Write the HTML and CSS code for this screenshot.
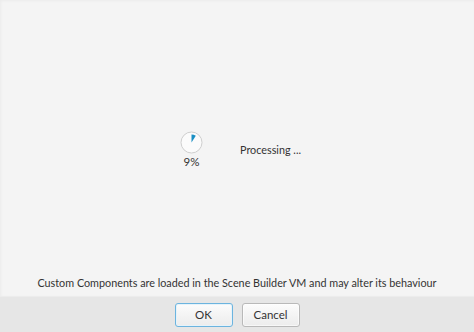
FILE: index.html
```html
<!DOCTYPE html>
<html>
<head>
<meta charset="utf-8">
<link rel="stylesheet" href="styles.css">
</head>
<body>
<div class="dialog">
  <div class="content">
    <div class="progress-row">
      <div class="indicator">
        <svg class="pie" width="23" height="23" viewBox="0 0 23 23">
          <circle cx="11.5" cy="11.5" r="10.5" fill="#fbfbfb" stroke="#cfcfcf" stroke-width="1"/>
          <path d="M11.5 11.5 L11.5 3.5 A8 8 0 0 1 15.79 4.75 Z" fill="#1a8fc4"/>
        </svg>
        <span class="percent">9%</span>
      </div>
      <span class="status">Processing ...</span>
    </div>
    <p class="warning">Custom Components are loaded in the Scene Builder VM and may alter its behaviour</p>
  </div>
  <div class="buttons">
    <button class="btn btn-default">OK</button>
    <button class="btn">Cancel</button>
  </div>
</div>
</body>
</html>
```
FILE: styles.css
```css
html, body {
  margin: 0;
  padding: 0;
  width: 474px;
  height: 332px;
  overflow: hidden;
}
body {
  font-family: Lato, "Open Sans", sans-serif;
  font-size: 10.8px;
  color: #333;
  background: #f4f4f4;
}
.dialog {
  display: flex;
  flex-direction: column;
  height: 332px;
}
.content {
  flex: 1;
  display: flex;
  flex-direction: column;
  align-items: center;
  box-shadow: inset 1px 1px 3px rgba(0,0,0,0.04);
}
.progress-row {
  display: flex;
  align-items: center;
  gap: 37px;
  margin-top: 131px;
  padding-left: 7px;
}
.indicator {
  display: flex;
  flex-direction: column;
  align-items: center;
  width: 23px;
}
.pie {
  display: block;
}
.percent {
  line-height: 16px;
  font-size: 11.5px;
}
.status {
  line-height: 16px;
  margin-top: -2px;
}
.warning {
  margin: auto 0 5px;
  line-height: 16px;
}
.buttons {
  height: 36px;
  background: #e6e6e6;
  border-top: 1px solid #ececec;
  box-sizing: border-box;
  display: flex;
  justify-content: center;
  align-items: center;
  gap: 9px;
}
.btn {
  font-family: inherit;
  font-size: 11.5px;
  color: #333;
  width: 58px;
  height: 24px;
  padding: 0;
  border: 1px solid #b9b9b9;
  border-radius: 3px;
  background: linear-gradient(#fcfcfc, #ececec);
  box-shadow: inset 0 0 0 1px rgba(255,255,255,0.6);
}
.btn-default {
  border-color: #6cb4df;
  box-shadow: inset 0 0 0 1px #e6f3fa;
}
```
